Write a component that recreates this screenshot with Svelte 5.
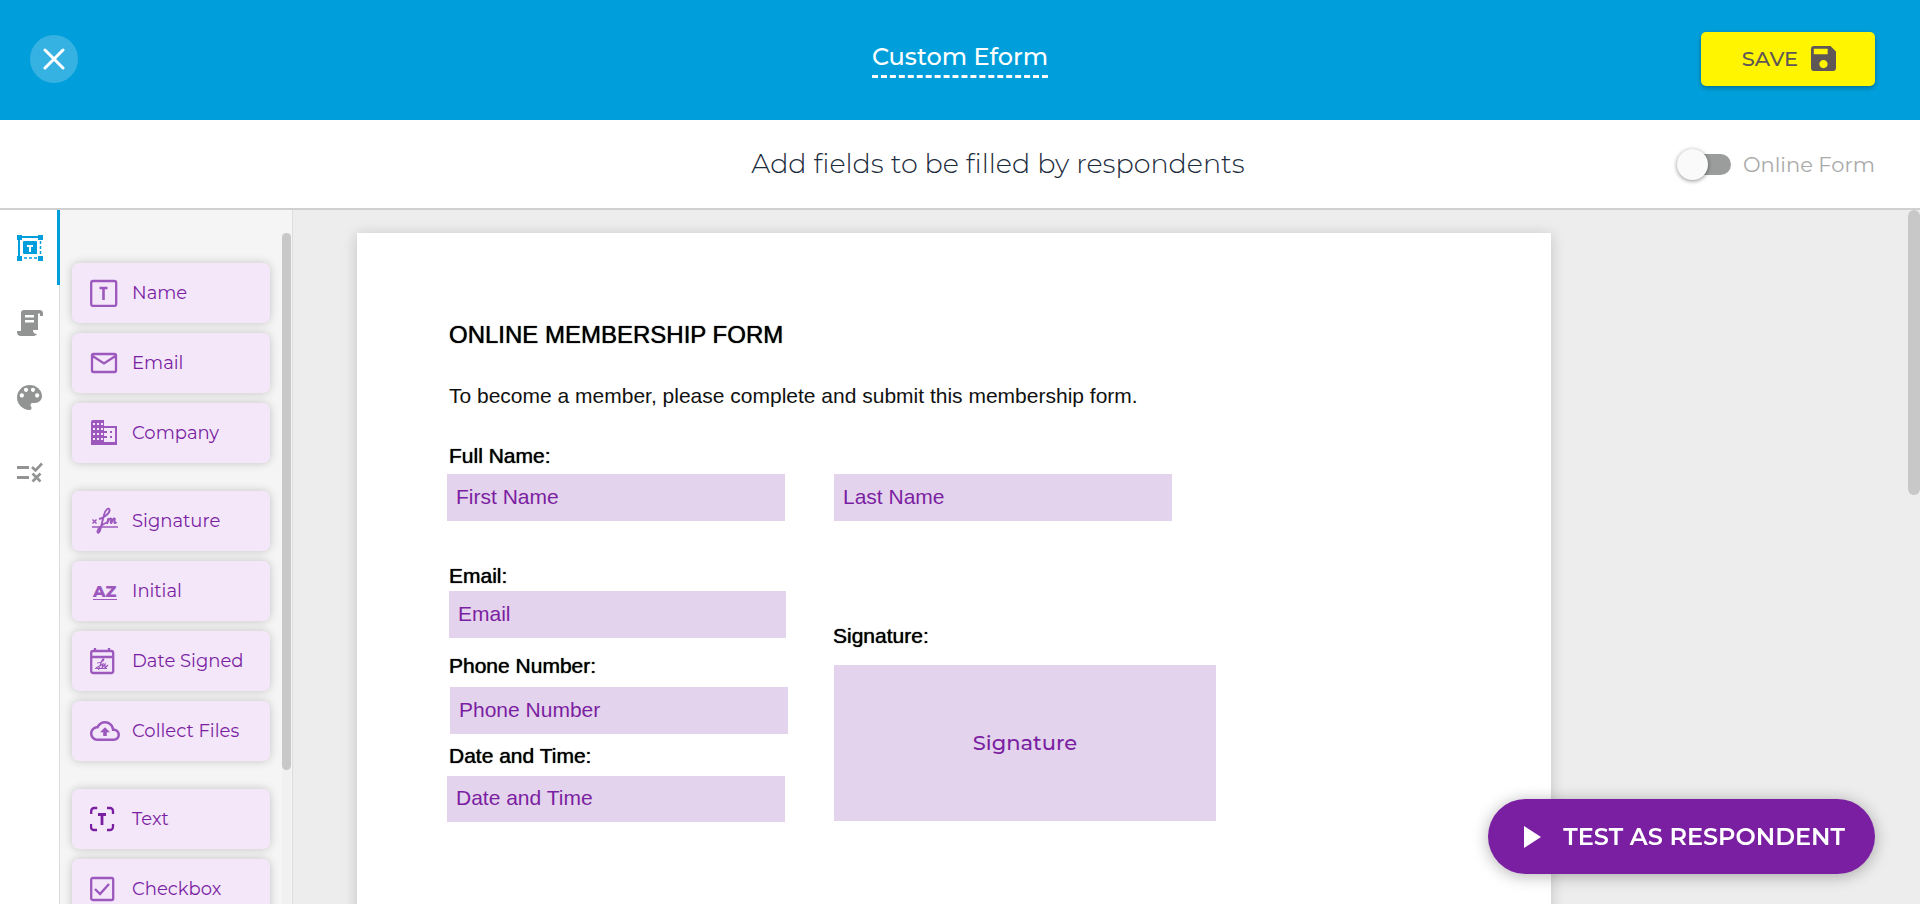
<script lang="ts">
  const railItems = [
    { id: 'fields', label: 'Fields' },
    { id: 'script', label: 'Document' },
    { id: 'palette', label: 'Theme' },
    { id: 'rules', label: 'Rules' }
  ]

  const fieldGroups = [
    ['Name', 'Email', 'Company'],
    ['Signature', 'Initial', 'Date Signed', 'Collect Files'],
    ['Text', 'Checkbox']
  ]

  // Printed labels sit on a 30px line grid
  const captions = [
    { text: 'Full Name:', row: 1, col: 1, target: 'first-name' },
    { text: 'Email:', row: 5, col: 1, target: 'email' },
    { text: 'Signature:', row: 7, col: 2, target: 'signature' },
    { text: 'Phone Number:', row: 8, col: 1, target: 'phone' },
    { text: 'Date and Time:', row: 11, col: 1, target: 'date-time' }
  ]

  // Dropped fields, positions relative to the paper
  const placed = [
    { id: 'first-name', text: 'First Name', x: 90, y: 241, w: 338, h: 47 },
    { id: 'last-name', text: 'Last Name', x: 477, y: 241, w: 338, h: 47 },
    { id: 'email', text: 'Email', x: 92, y: 358, w: 337, h: 47 },
    { id: 'phone', text: 'Phone Number', x: 93, y: 454, w: 338, h: 47 },
    { id: 'date-time', text: 'Date and Time', x: 90, y: 543, w: 338, h: 46 }
  ]
  const signature = { x: 477, y: 432, w: 382, h: 156 }

  let active = $state('fields')
  let online = $state(false)

  function box(f: { x: number; y: number; w: number; h: number }) {
    return `left:${f.x}px;top:${f.y}px;width:${f.w}px;height:${f.h}px`
  }
</script>

{#snippet railIcon(id: string)}
  <svg width="26" height="26" viewBox="0 0 26 26" fill="currentColor" aria-hidden="true">
    {#if id === 'fields'}
      <path d="M0 0h5v5H0zM21 0h5v5h-5zM0 21h5v5H0zM21 21h5v5h-5z" />
      <path d="M5 1h16v2H5zM1 5h2v16H1z" />
      <path d="M23.5 6v15M7 23h14" stroke="currentColor" stroke-width="1.5" stroke-dasharray="3 2" fill="none" />
      <path fill-rule="evenodd" d="M7 6h12a1 1 0 0 1 1 1v12H7a1 1 0 0 1-1-1V7a1 1 0 0 1 1-1zm3 4v2h2v5h2v-5h2v-2z" />
    {:else if id === 'script'}
      <path fill-rule="evenodd" d="M7 0h15.5A3.5 3.5 0 0 1 26 3.5V6h-3V3.5h-2V20h-5v1H4V3a3 3 0 0 1 3-3zm1 5v2.500h9V5zm0 5v2.500h9V10z" />
      <path d="M0 21h16c.5 2 1.5 3 4 3-1 1.500-2.500 2-4 2H4c-2.500 0-4-1.500-4-4z" />
    {:else if id === 'palette'}
      <svg viewBox="3 3 18 18" width="25" height="25">
        <path d="M12 3a9 9 0 0 0 0 18c.83 0 1.5-.67 1.5-1.5 0-.39-.15-.74-.39-1.01-.23-.26-.38-.61-.38-.99 0-.83.67-1.5 1.5-1.5H16c2.76 0 5-2.24 5-5 0-4.42-4.03-8-9-8zm-5.5 9c-.83 0-1.5-.67-1.5-1.5S5.67 9 6.5 9 8 9.67 8 10.5 7.33 12 6.5 12zm3-4C8.67 8 8 7.33 8 6.5S8.67 5 9.5 5s1.5.67 1.5 1.5S10.33 8 9.5 8zm5 0c-.83 0-1.5-.67-1.5-1.5S13.67 5 14.5 5s1.5.67 1.5 1.5S15.33 8 14.5 8zm3 4c-.83 0-1.5-.67-1.5-1.5S16.67 9 17.5 9s1.5.67 1.5 1.5-.67 1.5-1.5 1.5z" />
      </svg>
    {:else}
      <path d="M0 6h12v3H0zM0 16h12v3H0z" />
      <path d="M15 7l3.5 3.5L25 3.5M15.5 13.500l8 8M23.5 13.500l-8 8" stroke="currentColor" stroke-width="2.6" fill="none" />
    {/if}
  </svg>
{/snippet}

{#snippet fieldIcon(name: string)}
  <svg width="30" height="28" viewBox="0 0 30 28" fill="none" stroke="currentColor" stroke-width="2.3" aria-hidden="true">
    {#if name === 'Name'}
      <rect x="1.2" y="2" width="25" height="25" rx="2" />
      <path d="M9.500 9h8M13.500 9v12" stroke-width="2.600" />
    {:else if name === 'Email'}
      <rect x="2" y="5" width="24" height="18" rx="1.5" />
      <path d="M2.5 7L14 14.500 25.500 7" />
    {:else if name === 'Company'}
      <path fill="currentColor" stroke="none" fill-rule="evenodd" d="M3 1h11v6h13v19H1V3a2 2 0 0 1 2-2zM3 4v2h2V4zm4 0v2h2V4zm4 0v2h2V4zM3 9v2h2V9zm4 0v2h2V9zm4 0v2h2V9zM3 14v2h2v-2zm4 0v2h2v-2zm4 0v2h2v-2zM3 19v2h2v-2zm4 0v2h2v-2zm4 0v2h2v-2zM14 9v3h3v2h-3v3h3v2h-3v4h11V9zm6 3h2v2h-2zm0 5h2v2h-2z" />
    {:else if name === 'Signature'}
      <path d="M2 20h26" stroke-width="1.5" />
      <path d="M2.500 12.500l4 4M6.500 12.500l-4 4" stroke-width="1.5" />
      <path d="M9 12c5-1 11-6 10.500-9C19 0 15.500 2 14 8l-3 12c-1 5-3 7-3.500 5s3-7 10-10l1-4-1.500 6c1-4 3-6 4-5.500s-1 4 0 4.500 1-4 3-4.500-.5 4 .5 4.500 1.500-.5 2-1" stroke-width="1.9" />
    {:else if name === 'Initial'}
      <text x="3" y="20" font-size="16" font-weight="800" fill="currentColor" stroke="none">AZ</text>
      <path d="M3 22.500h24" stroke-width="1" />
    {:else if name === 'Date Signed'}
      <rect x="1.200" y="4" width="22" height="22" rx="2" />
      <path d="M1 10h22M5 1v4M19 1v4" />
      <path d="M7 16c4 0 8-3 6.500-4S10 20 8.500 23M6 21l7-4-1 4 3-4v4l3-3M5 21.500h12" stroke-width="1.2" />
    {:else if name === 'Collect Files'}
      <svg x="0" y="4" width="30" height="20" viewBox="0 4 24 16" fill="currentColor" stroke="none">
        <path d="M19.350 10.040C18.670 6.590 15.640 4 12 4 9.110 4 6.600 5.640 5.350 8.040 2.340 8.360 0 10.910 0 14c0 3.310 2.690 6 6 6h13c2.760 0 5-2.240 5-5 0-2.640-2.050-4.780-4.650-4.960zM19 18H6c-2.210 0-4-1.790-4-4s1.790-4 4-4h.71C7.370 7.690 9.480 6 12 6c3.040 0 5.500 2.460 5.500 5.500v.5H19c1.660 0 3 1.340 3 3s-1.340 3-3 3zM8 13h2.550v3h2.900v-3H16l-4-4z" />
      </svg>
    {:else if name === 'Text'}
      <path d="M1.200 9V6a3 3 0 0 1 3-3h3M17 3h3a3 3 0 0 1 3 3v3M23 19v3a3 3 0 0 1-3 3h-3M7 25H4a3 3 0 0 1-3-3v-3" />
      <path d="M8 9.500h8M12 9v11" stroke-width="2.8" />
    {:else}
      <rect x="1.200" y="3" width="22" height="22" rx="1.5" />
      <path d="M5 14l5 5L19 9" stroke-width="2.4" />
    {/if}
  </svg>
{/snippet}

<div class="app">
  <header class="topbar">
    <button class="close" aria-label="Close">
      <svg width="22" height="22" viewBox="0 0 22 22" stroke="#fff" stroke-width="3" stroke-linecap="round" aria-hidden="true">
        <path d="M2 2l18 18M20 2L2 20" />
      </svg>
    </button>
    <h1>Custom Eform</h1>
    <button class="save">
      SAVE
      <svg width="25" height="25" viewBox="3 3 18 18" fill="currentColor" aria-hidden="true">
        <path d="M17 3H5c-1.110 0-2 .9-2 2v14c0 1.100.89 2 2 2h14c1.100 0 2-.9 2-2V7l-4-4zm-5 16c-1.660 0-3-1.340-3-3s1.340-3 3-3 3 1.340 3 3-1.340 3-3 3zm3-10H5V5h10v4z" />
      </svg>
    </button>
  </header>

  <div class="subbar">
    <h2>Add fields to be filled by respondents</h2>
    <label class="toggle">
      <input type="checkbox" role="switch" bind:checked={online} />
      Online Form
    </label>
  </div>

  <div class="workspace">
    <nav class="rail">
      {#each railItems as item (item.id)}
        <button class:active={active === item.id} aria-label={item.label} onclick={() => (active = item.id)}>
          {@render railIcon(item.id)}
        </button>
      {/each}
    </nav>

    <aside class="sidebar">
      <div class="scroller">
        {#each fieldGroups as group}
          <div class="group">
            {#each group as name (name)}
              <button class="field-button" class:strong={name === 'Text'}>
                {@render fieldIcon(name)}
                <span>{name}</span>
              </button>
            {/each}
          </div>
        {/each}
      </div>
      <div class="track"><div class="thumb"></div></div>
    </aside>

    <main>
      <div class="canvas">
        <article class="paper">
          <h3>ONLINE MEMBERSHIP FORM</h3>
          <p>To become a member, please complete and submit this membership form.</p>
          <div class="captions">
            {#each captions as c (c.text)}
              <label for={c.target} style="grid-area:{c.row} / {c.col}">{c.text}</label>
            {/each}
          </div>
          {#each placed as f (f.id)}
            <input id={f.id} class="placed" type="text" placeholder={f.text} aria-label={f.text} style={box(f)} />
          {/each}
          <button id="signature" class="placed sign" style={box(signature)}>Signature</button>
        </article>
      </div>
      <div class="track wide"><div class="thumb"></div></div>
    </main>
  </div>

  <button class="test">
    <svg width="17" height="22" viewBox="0 0 17 22" fill="currentColor" aria-hidden="true">
      <path d="M0 0l17 11L0 22z" />
    </svg>
    TEST AS RESPONDENT
  </button>
</div>

<style>
  :global(body) {
    margin: 0;
  }
  .app,
  .app :is(button, input) {
    box-sizing: border-box;
    font-family: Montserrat, Inter, sans-serif;
  }
  .app {
    display: flex;
    flex-direction: column;
    height: 100vh;
    overflow: hidden;
    background: #fff;
  }
  button {
    border: 0;
    padding: 0;
    cursor: pointer;
  }
  h1,
  h2,
  h3,
  p {
    margin: 0;
  }

  .topbar {
    display: grid;
    grid-template-columns: 1fr auto 1fr;
    align-items: center;
    flex: none;
    height: 120px;
    padding: 0 30px 2px;
    box-sizing: border-box;
    background: #009fdb;
  }
  .close {
    display: grid;
    place-items: center;
    width: 48px;
    height: 48px;
    border-radius: 50%;
    background: #36b2e2;
  }
  h1 {
    margin-bottom: 2px;
    border-bottom: 3px dashed #fff;
    color: #fff;
    font-size: 24px;
    font-weight: 500;
    line-height: 36px;
  }
  .save {
    display: flex;
    align-items: center;
    justify-content: center;
    justify-self: end;
    gap: 13px;
    width: 174px;
    height: 54px;
    margin-right: 15px;
    padding: 0 0 2px 2px;
    border-radius: 5px;
    background: #fff500;
    box-shadow: 0 2px 5px rgba(0, 0, 0, 0.3);
    color: #5f5657;
    font-size: 21px;
    font-weight: 500;
  }

  .subbar {
    display: grid;
    grid-template-columns: 1fr auto 1fr;
    align-items: center;
    flex: none;
    height: 88px;
    padding: 0 45px 0 121px;
    border-bottom: 2px solid #d0d0d0;
  }
  h2 {
    grid-column: 2;
    color: #1c2c3c;
    font-size: 27px;
    font-weight: 300;
    line-height: 36px;
  }
  .toggle {
    display: flex;
    align-items: center;
    justify-self: end;
    gap: 12px;
    color: #aaa;
    font-size: 21px;
  }
  .toggle input {
    appearance: none;
    position: relative;
    width: 48px;
    height: 21px;
    margin: 0;
    border-radius: 11px;
    background: #9b9d9c;
    cursor: pointer;
  }
  .toggle input::before {
    content: '';
    position: absolute;
    top: -5px;
    left: -6px;
    width: 31px;
    height: 31px;
    border-radius: 50%;
    background: #fafafa;
    box-shadow: 0 1px 4px rgba(0, 0, 0, 0.45);
  }
  .toggle input:checked::before {
    left: 23px;
  }

  .workspace {
    display: flex;
    flex: 1;
    min-height: 0;
  }
  .rail {
    display: flex;
    flex-direction: column;
    flex: none;
    width: 59px;
    border-right: 1px solid #ddd;
  }
  .rail button {
    display: grid;
    place-items: center;
    height: 75px;
    background: none;
    color: #929493;
  }
  .rail button.active {
    margin-right: -1px;
    border-left: 3px solid transparent;
    border-right: 3px solid #009fdb;
    color: #009fdb;
  }

  .sidebar {
    display: flex;
    flex: none;
    width: 232px;
    border-right: 1px solid #ddd;
    background: #f5f5f5;
  }
  .scroller {
    display: flex;
    flex-direction: column;
    flex: 1;
    gap: 28px;
    padding: 53px 12px 28px;
    overflow-y: auto;
    scrollbar-width: none;
  }
  .group {
    display: flex;
    flex-direction: column;
    gap: 10px;
  }
  .field-button {
    display: flex;
    align-items: center;
    gap: 12px;
    flex: none;
    height: 60px;
    padding: 0 18px;
    border-radius: 7px;
    background: #f4e7fa;
    box-shadow: 0 0 10px rgba(0, 0, 0, 0.2);
    color: #7b1fa2;
    font-size: 18px;
    white-space: nowrap;
  }
  .field-button svg {
    flex: none;
    color: #9c58bd;
  }
  .field-button.strong svg {
    color: #7b1fa2;
  }
  .field-button span {
    padding-bottom: 1px;
  }
  .track {
    flex: none;
    width: 9px;
    margin: 23px 1px 0 0;
    background: #f1f1f1;
  }
  .track .thumb {
    height: 80%;
    border-radius: 5px;
    background: #c8c8c8;
  }
  .track.wide {
    width: 12px;
    margin: 0;
    background: none;
  }
  .track.wide .thumb {
    height: 41%;
    border-radius: 6px;
  }

  main {
    display: flex;
    flex: 1;
    min-width: 0;
    background: #ededed;
  }
  .canvas {
    flex: 1;
    overflow: auto;
    scrollbar-width: none;
    padding: 23px 64px;
  }
  .paper {
    position: relative;
    box-sizing: border-box;
    max-width: 1194px;
    min-height: 1640px;
    padding: 87px 92px;
    background: #fff;
    box-shadow: 0 2px 14px rgba(0, 0, 0, 0.18);
    color: #111;
    font-family: 'Liberation Sans', Arial, sans-serif;
    font-size: 21px;
    line-height: 30px;
  }
  h3,
  .captions {
    color: #000;
    text-shadow: 0 0 1px #000;
  }
  h3 {
    margin-bottom: 31px;
    font-size: 24px;
    font-weight: 400;
  }
  p {
    margin-bottom: 30px;
  }
  .captions {
    display: grid;
    grid-template-columns: 384px 1fr;
    grid-auto-rows: 30px;
  }
  .placed {
    position: absolute;
    border: 0;
    padding: 0 9px 2px;
    background: #e4d3ec;
    color: #7b1fa2;
  }
  .app input.placed {
    font-family: 'Liberation Sans', Arial, sans-serif;
    font-size: 21px;
  }
  .placed::placeholder {
    color: #7b1fa2;
    opacity: 1;
  }
  .sign {
    font-size: 21px;
    font-weight: 500;
  }

  .test {
    display: flex;
    align-items: center;
    gap: 22px;
    position: fixed;
    right: 45px;
    bottom: 30px;
    height: 75px;
    padding: 0 30px 0 36px;
    border-radius: 38px;
    background: #7b1fa2;
    box-shadow: 0 2px 16px rgba(0, 0, 0, 0.3);
    color: #fff;
    font-size: 24px;
    font-weight: 600;
  }
</style>
